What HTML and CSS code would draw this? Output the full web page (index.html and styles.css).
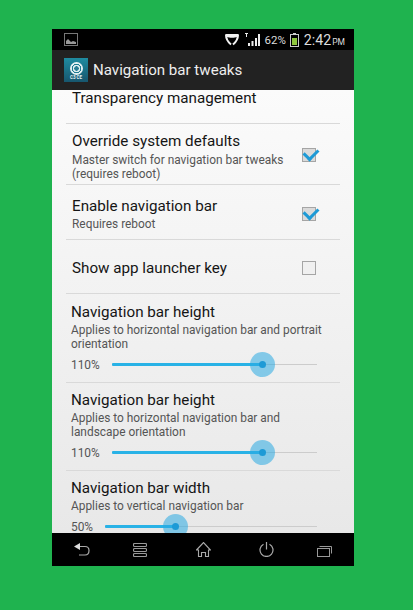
FILE: index.html
```html
<!DOCTYPE html>
<html lang="en">
<head>
  <meta charset="UTF-8">
  <meta name="viewport" content="width=device-width, initial-scale=1.0">
  <title>Navigation bar tweaks</title>
  <link rel="stylesheet" href="styles.css">
</head>
<body>
  <div class="phone">
    <div class="status">
      <svg class="pic" width="14" height="13" viewBox="0 0 14 13">
        <rect x="0.5" y="0.5" width="13" height="12" fill="none" stroke="#777"/>
        <path d="M2 11V8l2-2 2 2 1 1 2-1 3 1v2z" fill="#999"/>
      </svg>
      <div class="status-right">
        <svg class="shield" width="16" height="13" viewBox="0 0 16 13">
          <path d="M1 1h14l-2 3c-2 1-8 1-10 0z" fill="#f2f2f2"/>
          <path d="M2 2c0 4 2 7 5 9.500M14 2c0 4-2 7-5 9.500" fill="none" stroke="#f2f2f2" stroke-width="2"/>
        </svg>
        <svg class="signal" width="15" height="13" viewBox="0 0 15 13">
          <path d="M0 0h3v1H2v3H1V1H0zM3 10h2v3H3zM6.500 8h2v5h-2zM10 5h2v8h-2zM13 1h2v12h-2z" fill="#eee"/>
        </svg>
        <span class="pct">62%</span>
        <svg class="batt" width="9" height="14" viewBox="0 0 9 14">
          <rect x="3" y="0" width="3" height="2" fill="#ccc"/>
          <rect x="0.500" y="1.500" width="8" height="12" fill="none" stroke="#ccc"/>
          <rect x="2" y="5" width="5" height="7" fill="#8fc73e"/>
        </svg>
        <span class="clock">2:42<small>PM</small></span>
      </div>
    </div>

    <div class="actionbar">
      <div class="logo">
        <div class="target"></div>
        <span>C3 CE</span>
      </div>
      <h1>Navigation bar tweaks</h1>
    </div>

    <div class="list">
      <div class="row first">
        <h2>Transparency management</h2>
      </div>

      <div class="row check-row r-override">
        <div class="text">
          <h2>Override system defaults</h2>
          <p>Master switch for navigation bar tweaks<br>(requires reboot)</p>
        </div>
        <div class="box on"></div>
      </div>

      <div class="row check-row r-enable">
        <div class="text">
          <h2>Enable navigation bar</h2>
          <p>Requires reboot</p>
        </div>
        <div class="box on"></div>
      </div>

      <div class="row check-row r-show">
        <div class="text">
          <h2>Show app launcher key</h2>
        </div>
        <div class="box"></div>
      </div>

      <div class="row slider-row tall">
        <h2>Navigation bar height</h2>
        <p>Applies to horizontal navigation bar and portrait<br>orientation</p>
        <div class="slider">
          <span class="val">110%</span>
          <div class="track">
            <div class="fill" style="width: 151px"><div class="thumb"></div></div>
          </div>
        </div>
      </div>

      <div class="row slider-row">
        <h2>Navigation bar height</h2>
        <p>Applies to horizontal navigation bar and<br>landscape orientation</p>
        <div class="slider">
          <span class="val">110%</span>
          <div class="track">
            <div class="fill" style="width: 151px"><div class="thumb"></div></div>
          </div>
        </div>
      </div>

      <div class="row slider-row last">
        <h2>Navigation bar width</h2>
        <p>Applies to vertical navigation bar</p>
        <div class="slider">
          <span class="val">50%</span>
          <div class="track">
            <div class="fill" style="width: 71px"><div class="thumb"></div></div>
          </div>
        </div>
      </div>
    </div>

    <div class="navbar">
      <svg class="nav-back" width="16" height="13" viewBox="0 0 16 13" fill="none" stroke="#aaa" stroke-width="1.200">
        <path d="M4 3.500h7c3 0 4 1.500 4 4s-1 4.500-4 4.500H5"/>
        <path d="M0 3.500l6-3.500v7z" fill="#ddd" stroke="none"/>
      </svg>
      <svg class="nav-menu" width="14" height="14" viewBox="0 0 14 14" fill="none" stroke="#999" stroke-width="1.100">
        <rect x="0.500" y="0.500" width="13" height="3" rx="1"/>
        <rect x="0.500" y="5.500" width="13" height="3" rx="1"/>
        <rect x="0.500" y="10.500" width="13" height="3" rx="1"/>
      </svg>
      <svg class="nav-home" width="15" height="15" viewBox="0 0 15 15" fill="none" stroke="#aaa" stroke-width="1.100">
        <path d="M0.500 8l7-7.500 7 7.500h-2v6.500h-3v-4h-4v4h-3V8z"/>
      </svg>
      <svg class="nav-power" width="15" height="15" viewBox="0 0 15 15" fill="none" stroke="#aaa" stroke-width="1.200">
        <path d="M4.500 2.200a6.500 6.500 0 1 0 6 0"/>
        <path d="M7.500 0v7.500"/>
      </svg>
      <svg class="nav-recent" width="15" height="11" viewBox="0 0 15 11" fill="none" stroke="#999" stroke-width="1">
        <rect x="0.500" y="2.500" width="12" height="8"/>
        <path d="M2.500 0.500h12v7"/>
      </svg>
    </div>
  </div>
</body>
</html>
```

FILE: styles.css
```css
* {
  box-sizing: border-box;
}
body {
  margin: 0;
  height: 610px;
  overflow: hidden;
  background: #1fb34f;
  font-family: Roboto, "Liberation Sans", sans-serif;
}
.phone {
  width: 302px;
  height: 537px;
  margin: 29px 0 0 52px;
  display: flex;
  flex-direction: column;
  background: #000;
}
.status {
  height: 21px;
  padding: 0 9px 0 12px;
  display: flex;
  align-items: center;
  justify-content: space-between;
  color: #ddd;
  flex: none;
}
.status-right {
  display: flex;
  align-items: center;
}
.signal {
  margin-left: 5px;
}
.pct {
  margin-left: 4px;
  font-size: 11.500px;
}
.batt {
  margin-left: 4px;
}
.clock {
  margin-left: 5px;
  font-size: 14.200px;
}
.clock small {
  margin-left: 1px;
  font-size: 8.500px;
}
.actionbar {
  height: 40px;
  flex: none;
  background: #222;
  display: flex;
  align-items: center;
  padding: 0 12px;
  gap: 5px;
}
.logo {
  width: 24px;
  height: 24px;
  background: linear-gradient(#1f8ba0, #17566e);
  display: flex;
  flex-direction: column;
  align-items: center;
  padding-top: 4px;
}
.target {
  width: 13px;
  height: 13px;
  border-radius: 50%;
  background: radial-gradient(circle, #2b7f95 0 2px, #e4f0f3 2.500px 3.500px, #1f7c93 4px 4.500px, #e4f0f3 5px);
}
.logo span {
  font-size: 4.500px;
  font-weight: bold;
  color: #e6f2f5;
  line-height: 6px;
}
h1 {
  margin: 0;
  font-size: 15.100px;
  font-weight: 400;
  color: #eee;
}
.list {
  flex: 1;
  min-height: 0;
  overflow: hidden;
  padding: 0 14px;
  background: linear-gradient(#fbfbfb, #e8e8e8);
}
.row {
  border-bottom: 1px solid #d9d9d9;
}
.row.first {
  height: 35px;
}
.row.first h2 {
  margin-top: -1px;
  margin-left: 6px;
}
h2 {
  margin: 0;
  font-size: 15.200px;
  line-height: 18px;
  font-weight: 400;
  color: #151515;
}
p {
  margin: 0;
  font-size: 11.900px;
  line-height: 14px;
  color: #555;
}
.check-row {
  display: flex;
  align-items: flex-start;
  justify-content: space-between;
  padding: 8px 24px 0 6px;
}
.check-row h2 {
  margin-bottom: 3px;
}
.r-override {
  height: 61px;
}
.r-enable {
  height: 55px;
  padding-top: 12px;
}
.r-enable h2 {
  margin-bottom: 2px;
}
.r-show {
  height: 54px;
  padding-top: 19px;
}
.r-override .box {
  margin-top: 16px;
}
.r-enable .box {
  margin-top: 10px;
}
.r-show .box {
  margin-top: 2px;
}
.box {
  position: relative;
  width: 14px;
  height: 14px;
  flex: none;
  border: 1px solid #a5a5a5;
  background: #f0f0f0;
}
.box.on {
  background: #dadada;
}
.box.on::after {
  content: "";
  position: absolute;
  left: 1px;
  top: -1px;
  width: 11px;
  height: 7px;
  border-left: 3px solid #1d9ad6;
  border-bottom: 3px solid #1d9ad6;
  transform: rotate(-45deg);
}
.slider-row {
  height: 88px;
  padding: 8px 4px 0 5px;
}
.slider-row.tall {
  height: 89px;
  padding-top: 9px;
}
.slider-row.last {
  height: 62px;
  border-bottom: none;
}
.slider-row p {
  margin-top: 2px;
}
.slider {
  display: flex;
  align-items: center;
  gap: 12px;
  margin-top: 3px;
  height: 20px;
}
.val {
  margin-top: 1px;
  font-size: 11.900px;
  color: #555;
  flex: none;
}
.track {
  flex: 1;
  margin-right: 19px;
  height: 1px;
  background: #ccc;
  position: relative;
}
.fill {
  position: absolute;
  left: 0;
  top: -1px;
  height: 3px;
  background: #29b2e6;
  border-radius: 1px;
}
.thumb {
  position: absolute;
  right: -12px;
  top: -11px;
  width: 25px;
  height: 25px;
  border-radius: 50%;
  background: rgba(41, 170, 225, 0.55);
}
.thumb::after {
  content: "";
  position: absolute;
  left: 9px;
  top: 9px;
  width: 7px;
  height: 7px;
  border-radius: 50%;
  background: #1d9ad6;
}
.navbar {
  height: 33px;
  flex: none;
  background: #000;
  display: flex;
  align-items: center;
  padding: 0 0 0 22px;
}
.nav-menu {
  margin-left: 43px;
}
.nav-home {
  margin-left: 49px;
}
.nav-power {
  margin-left: 48px;
}
.nav-recent {
  margin-left: 43px;
  margin-top: 3px;
}
```
